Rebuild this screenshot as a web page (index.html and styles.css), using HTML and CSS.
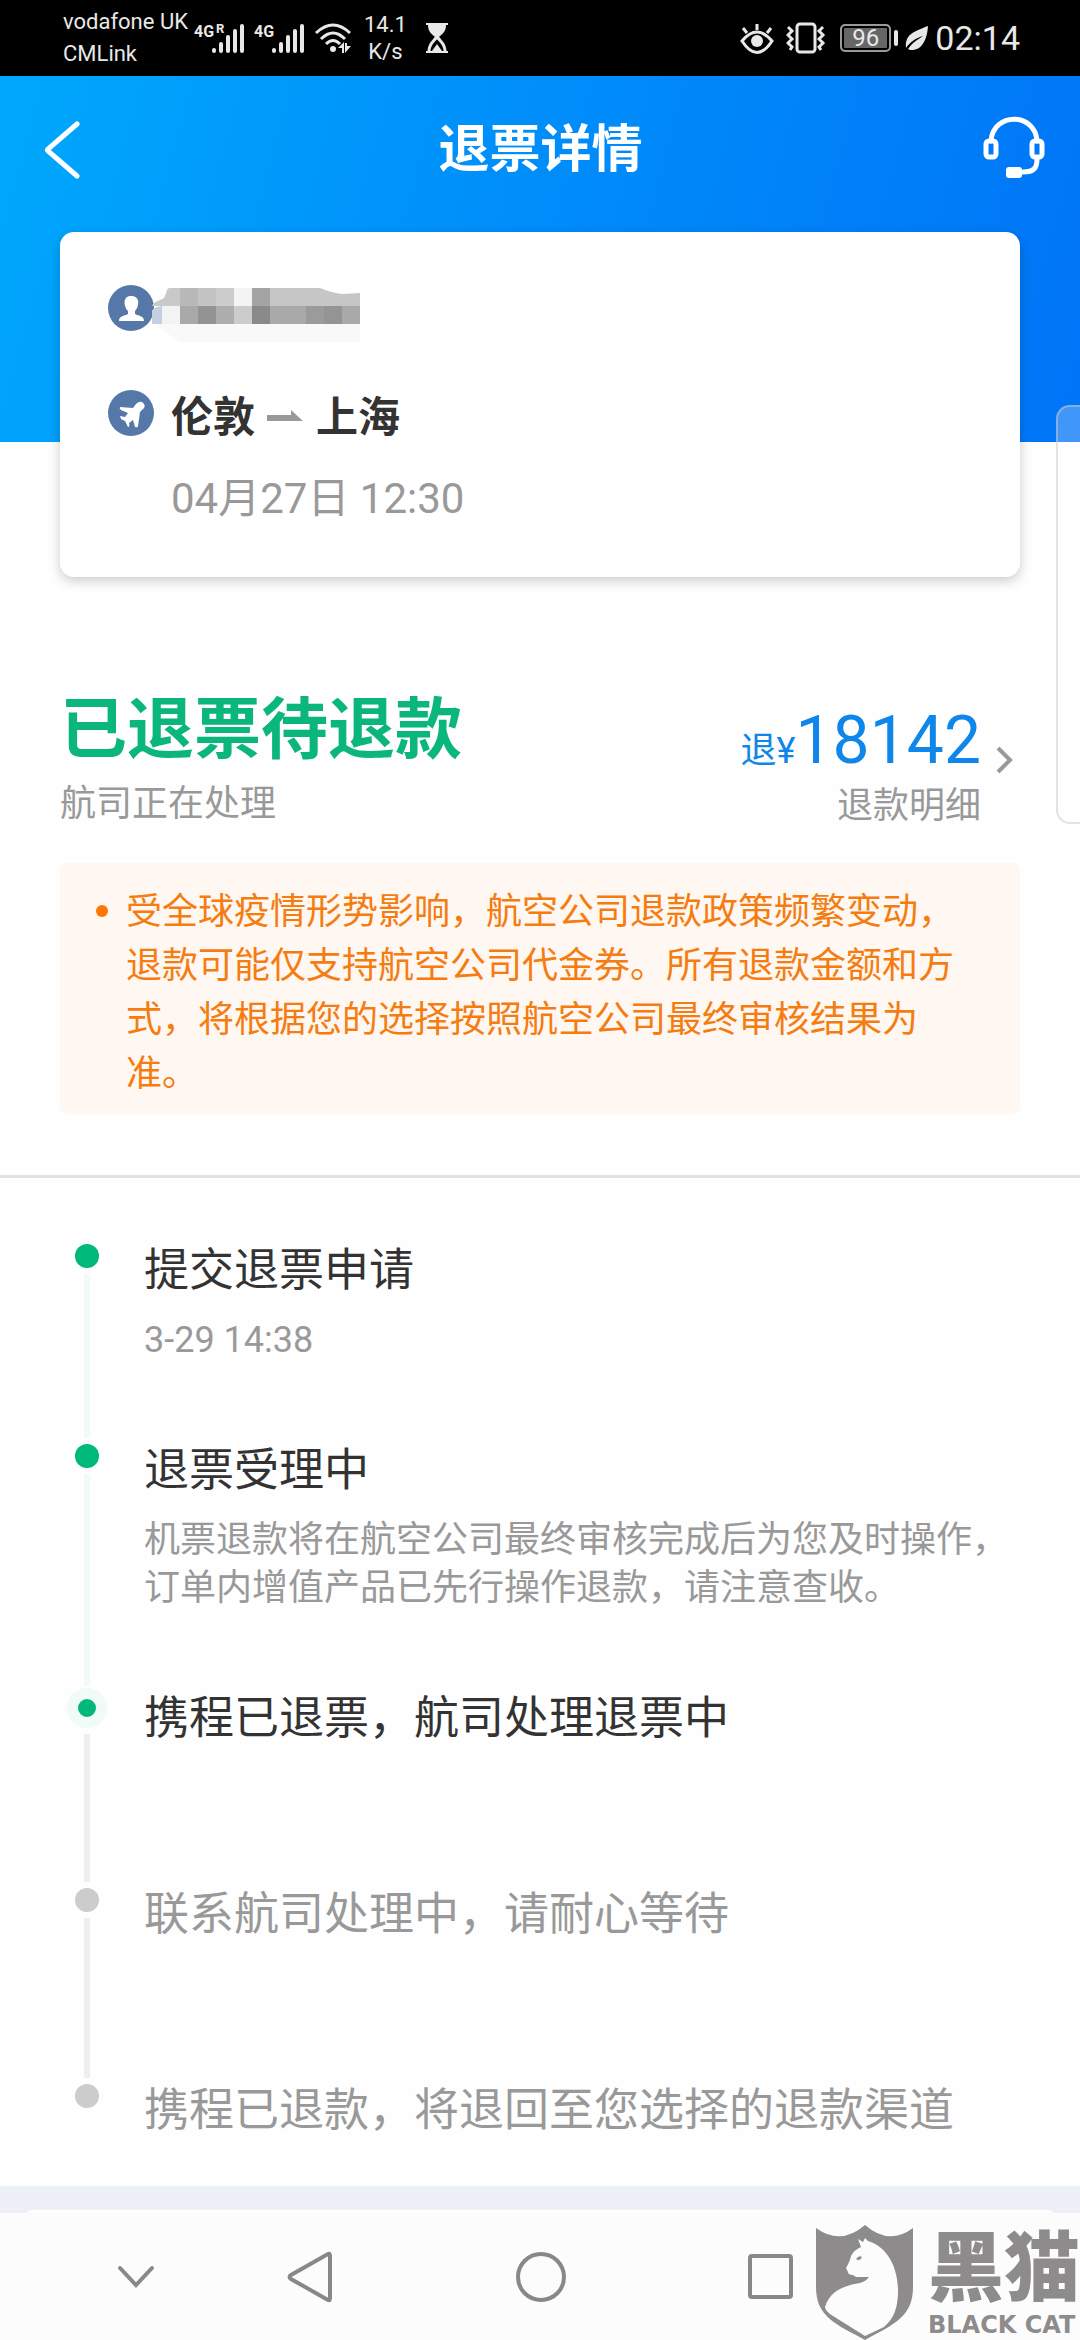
FILE: index.html
```html
<!DOCTYPE html>
<html lang="zh-CN">
<head>
    <meta charset="UTF-8">
    <title>退票详情</title>
    <link rel="stylesheet" href="styles.css">
</head>
<body>

    <div class="status-bar">
        <div class="carrier">vodafone UK<br>CMLink</div>
        <svg class="signal" width="52" height="32" viewBox="0 0 52 32">
            <text x="0" y="15">4G</text>
            <text class="roaming" x="22" y="11">R</text>
            <path d="M20 28v1M27 22v7M34 15v14M41 9v20M48 4v25"/>
        </svg>
        <svg class="signal second" width="52" height="32" viewBox="0 0 52 32">
            <text x="0" y="15">4G</text>
            <path d="M20 28v1M27 22v7M34 15v14M41 9v20M48 4v25"/>
        </svg>
        <svg class="wifi" width="38" height="32" viewBox="0 0 38 32">
            <path class="line" d="M2 11Q19-5 36 11M7 17Q19 5 31 17M12 22Q19 15 26 22"/>
            <circle cx="19" cy="27" r="3"/>
            <path d="M24 26l6-6v11h-2v-5zM31 21h2v3h4l-6 7z"/>
        </svg>
        <div class="speed">14.1<br>K/s</div>
        <svg class="hourglass" width="24" height="32" viewBox="0 0 24 32">
            <path d="M1 1h22v2H1zM1 29h22v2H1zM3 3h18c0 7-4 9-8 13h-2C7 12 3 10 3 3z"/>
            <path class="line" d="M4 29c0-7 4-9 7-13h2c3 4 7 6 7 13"/>
            <path d="M7 29l5-7 5 7z"/>
        </svg>
        <div class="status-right">
            <svg width="34" height="32" viewBox="0 0 34 32">
                <path class="line" d="M2 19Q17 1 32 19Q17 42 2 19zM17 8V2M7 11L3 6M27 11l4-5"/>
                <circle cx="17" cy="19" r="6"/>
            </svg>
            <svg width="40" height="32" viewBox="0 0 40 32">
                <rect class="line" x="11" y="2" width="18" height="28" rx="3"/>
                <path class="line" d="M2 5l4 4-4 4 4 4-4 4 4 4-2 3M37 5l-4 4 4 4-4 4 4 4-4 4 2 3"/>
            </svg>
            <div class="battery">96</div>
            <svg class="leaf" width="24" height="28" viewBox="0 0 24 28">
                <path d="M1 24C0 11 7 8 23 2C22 16 17 27 5 26L3 25C7 19 12 16 18 12C11 14 5 18 1 24z"/>
            </svg>
            <div class="clock">02:14</div>
        </div>
    </div>

    <div class="hero">
        <div class="nav-header">
            <button class="icon-btn back" type="button" aria-label="返回">
                <svg width="36" height="60" viewBox="0 0 36 60">
                    <path d="M33 4L4 29Q3 30 4 31L33 56"/>
                </svg>
            </button>
            <h1>退票详情</h1>
            <button class="icon-btn service" type="button" aria-label="客服">
                <svg width="62" height="62" viewBox="0 0 62 62">
                    <path d="M8 25C10-4 52-4 54 25M54 43c0 9-3 13-14 13"/>
                    <rect x="3" y="25" width="10" height="16" rx="3"/>
                    <rect x="49" y="25" width="10" height="16" rx="3"/>
                    <rect class="mic" x="23" y="51" width="16" height="11" rx="3"/>
                </svg>
            </button>
        </div>

        <div class="card">
            <div class="card-row">
                <svg class="badge" width="46" height="46" viewBox="0 0 46 46">
                    <circle cx="23" cy="23" r="23"/>
                    <path d="M23 11c-9 0-7 11-3 15v3c-4 2-9 2-9 7h25c0-5-5-5-9-7v-3c4-4 6-15-4-15z"/>
                </svg>
                <!-- passenger name is hidden -->
                <svg class="masked" width="214" height="58" viewBox="0 0 214 58">
                    <path fill="#c9c9c9" d="M0 18C2 13 8 13 12 10C15 5 14 0 18 0H30V18z"/>
                    <path fill="#b9b9b9" d="M28 0h18v18H28z"/>
                    <path fill="#c4c4c4" d="M46 0h18v18H46z"/>
                    <path fill="#cccccc" d="M64 0h18v18H64z"/>
                    <path fill="#f4f4f4" d="M82 0h18v18H82z"/>
                    <path fill="#a4a4a4" d="M100 0h18v18h-18z"/>
                    <path fill="#c6c6c6" d="M118 0h50q12 5 22 6l18-1v13h-90z"/>
                    <path fill="#c4d0e2" d="M-4 36v-8q4-9 14-10v18z"/>
                    <path fill="#f3f3f3" d="M10 18h18v18H10z"/>
                    <path fill="#a9a9a9" d="M28 18h18v18H28z"/>
                    <path fill="#939393" d="M46 18h18v18H46z"/>
                    <path fill="#aeaeae" d="M64 18h18v18H64z"/>
                    <path fill="#cccccc" d="M82 18h18v18H82z"/>
                    <path fill="#8a8a8a" d="M100 18h18v18h-18z"/>
                    <path fill="#a9a9a9" d="M118 18h36v18h-36z"/>
                    <path fill="#9b9b9b" d="M154 18h18v18h-18z"/>
                    <path fill="#949494" d="M172 18h18v18h-18z"/>
                    <path fill="#a9a9a9" d="M190 18h18v18h-18z"/>
                    <path fill="#f9f9f9" d="M2 36h206v18H28z"/>
                </svg>
            </div>
            <div class="card-row route">
                <svg class="badge" width="46" height="46" viewBox="0 0 46 46">
                    <circle cx="23" cy="23" r="23"/>
                    <path d="M34 12q-3-1-6 2l-3 4-13-1q-1 2 1 3l7 3-3 4-5-1 1 3 4 2 3 6q2 0 1-4l4-3 2 7q3 1 3-1l2-14 4-4q2-3-2-6z"/>
                </svg>
                <span class="city">伦敦</span>
                <svg class="arrow" width="36" height="12" viewBox="0 0 36 12">
                    <path d="M0 5h24V0l12 11H0z"/>
                </svg>
                <span class="city">上海</span>
            </div>
            <div class="depart">04月27日 12:30</div>
        </div>
    </div>

    <div class="summary">
        <div>
            <h2>已退票待退款</h2>
            <p class="muted">航司正在处理</p>
        </div>
        <a class="refund" href="#">
            <span class="refund-text">
                <span class="amount">退¥<b>18142</b></span>
                <span class="muted">退款明细</span>
            </span>
            <svg width="18" height="30" viewBox="0 0 18 30">
                <path d="M3 3L15 15L3 27"/>
            </svg>
        </a>
    </div>

    <ul class="notice">
        <li>受全球疫情形势影响，航空公司退款政策频繁变动，退款可能仅支持航空公司代金券。所有退款金额和方式，将根据您的选择按照航空公司最终审核结果为准。</li>
    </ul>

    <ol class="timeline">
        <li class="step done">
            <div class="rail"></div>
            <div class="step-body">
                <h3>提交退票申请</h3>
                <p>3-29 14:38</p>
            </div>
        </li>
        <li class="step done">
            <div class="rail"></div>
            <div class="step-body">
                <h3>退票受理中</h3>
                <p>机票退款将在航空公司最终审核完成后为您及时操作，订单内增值产品已先行操作退款，请注意查收。</p>
            </div>
        </li>
        <li class="step current">
            <div class="rail"></div>
            <div class="step-body">
                <h3>携程已退票，航司处理退票中</h3>
            </div>
        </li>
        <li class="step">
            <div class="rail"></div>
            <div class="step-body">
                <h3>联系航司处理中，请耐心等待</h3>
            </div>
        </li>
        <li class="step">
            <div class="rail"></div>
            <div class="step-body">
                <h3>携程已退款，将退回至您选择的退款渠道</h3>
            </div>
        </li>
    </ol>

    <div class="next-section">
        <div class="next-card"></div>
    </div>

    <div class="system-nav">
        <button type="button" aria-label="收起">
            <svg width="54" height="54" viewBox="0 0 54 54"><path d="M11 18l16 17 16-17"/></svg>
        </button>
        <button type="button" aria-label="返回">
            <svg width="54" height="54" viewBox="0 0 54 54"><path d="M44 4L7 25Q4 27 7 29L44 50Q46 51 46 48V6Q46 3 44 4z"/></svg>
        </button>
        <button type="button" aria-label="主页">
            <svg width="54" height="54" viewBox="0 0 54 54"><circle cx="27" cy="27" r="23"/></svg>
        </button>
        <button type="button" aria-label="最近任务">
            <svg width="54" height="54" viewBox="0 0 54 54"><rect x="6" y="6" width="41" height="41" rx="2"/></svg>
        </button>
    </div>

    <div class="side-handle"></div>

    <div class="watermark">
        <svg width="98" height="115" viewBox="0 0 98 115">
            <path class="shield" d="M0 3Q25 21 49 0Q73 21 97 3V62C97 92 78 99 49 115C20 99 0 92 0 62z"/>
            <path class="cat" d="M42 14l5 3 2-4 3 3C72 22 82 43 82 66C82 87 75 96 68 102L49 111L17 91Q9 86 9 82C14 66 27 62 38 59Q49 58 53 52H40L37 50Q32 50 32 47L30 43Q34 36 35 31Q38 25 45 22z"/>
            <path class="shield" d="M40 34q3-4 6-2-2 5-6 2z"/>
        </svg>
        <div class="watermark-text">
            <div class="cn">黑猫</div>
            <div class="en">BLACK CAT</div>
        </div>
    </div>

</body>
</html>
```
FILE: styles.css
```css
*, *::before, *::after {
    box-sizing: border-box;
}

body {
    margin: 0;
    position: relative;
    min-height: 100vh;
    display: flex;
    flex-direction: column;
    overflow-x: hidden;
    font-family: Roboto, "Noto Sans CJK SC", sans-serif;
    font-size: 36px;
    color: #333;
    background: #fefefe;
}

h1, h2, h3, p, ul, ol {
    margin: 0;
    padding: 0;
}

h3, b {
    font-weight: normal;
}

svg {
    display: block;
    flex: none;
}

button {
    padding: 0;
    border: none;
    background: none;
    cursor: pointer;
}

/* status bar */
.status-bar {
    display: flex;
    align-items: center;
    height: 76px;
    padding: 0 60px 0 63px;
    background: #000;
    color: #e8e8e8;
    font-size: 22px;
    line-height: 32px;
    white-space: nowrap;
}

.status-bar svg {
    fill: #e8e8e8;
}

.status-bar .line {
    fill: none;
    stroke: #e8e8e8;
    stroke-width: 3px;
}

.signal {
    margin-left: 6px;
    font-size: 16px;
    font-weight: bold;
}

.signal.second {
    margin-left: 8px;
}

.signal path {
    stroke: #e8e8e8;
    stroke-width: 4px;
    stroke-linecap: round;
}

.signal .roaming {
    font-size: 13px;
}

.wifi {
    margin-left: 8px;
}

.speed {
    margin-left: 12px;
    line-height: 27px;
    text-align: center;
}

.hourglass {
    margin-left: 18px;
}

.status-right {
    display: flex;
    align-items: center;
    margin-left: auto;
}

.status-right svg {
    margin-right: 12px;
}

.battery {
    position: relative;
    width: 51px;
    height: 28px;
    margin: 0 14px 0 2px;
    border: 2px solid #999;
    border-radius: 5px;
    background: #666;
    box-shadow: inset 0 0 0 2px #000;
    font-size: 24px;
    line-height: 25px;
    text-align: center;
}

.battery::after {
    content: "";
    position: absolute;
    right: -9px;
    top: 4px;
    width: 4px;
    height: 16px;
    border-radius: 2px;
    background: #e8e8e8;
}

.status-right .leaf {
    margin-right: 6px;
}

.clock {
    font-size: 34px;
}

/* header and trip card */
.hero {
    padding: 0 60px;
    background: linear-gradient(105deg, #00a8fc, #008cfa 50%, #0074f7) no-repeat;
    background-size: 100% 366px;
}

.nav-header {
    display: flex;
    align-items: center;
    justify-content: space-between;
    height: 148px;
    margin: 0 -25px 8px -16px;
}

.nav-header h1 {
    font-size: 51px;
    line-height: 72px;
    color: #fff;
}

.icon-btn svg {
    fill: none;
    stroke: #fff;
    stroke-width: 5px;
    stroke-linecap: round;
}

.icon-btn.back {
    width: 54px;
}

.icon-btn.service {
    padding-bottom: 6px;
}

.icon-btn .mic {
    fill: #fff;
    stroke: none;
}

.card {
    padding: 53px 48px 50px;
    border-radius: 14px;
    background: #fff;
    box-shadow: 0 4px 12px rgba(0, 0, 0, 0.2);
}

.card-row {
    display: flex;
    align-items: flex-start;
    height: 46px;
}

.badge circle {
    fill: #5578a8;
}

.badge path {
    fill: #fff;
}

.masked {
    margin-top: 3px;
    margin-left: -2px;
}

.route {
    height: 56px;
    margin-top: 59px;
}

.city {
    font-size: 42px;
    line-height: 56px;
    font-weight: bold;
}

.route .city:first-of-type {
    margin-left: 17px;
}

.arrow {
    margin: 20px 13px 0 12px;
    fill: #999;
}

.depart {
    margin-top: 25px;
    margin-left: 63px;
    font-size: 42px;
    line-height: 56px;
    color: #999;
}

/* refund summary */
.summary {
    display: flex;
    align-items: flex-start;
    justify-content: space-between;
    padding: 113px 67px 0 60px;
}

.summary h2 {
    font-size: 67px;
    line-height: 80px;
    color: #0bb67c;
}

.muted {
    font-size: 36px;
    line-height: 48px;
    color: #999;
}

.summary p.muted {
    margin-top: 10px;
}

.refund {
    display: flex;
    align-items: center;
    gap: 14px;
    text-decoration: none;
}

.refund-text {
    display: flex;
    flex-direction: column;
    align-items: flex-end;
    gap: 4px;
    padding-top: 14px;
}

.amount {
    line-height: 48px;
    color: #0f86ea;
}

.amount b {
    font-size: 66px;
    line-height: 74px;
}

.refund svg {
    fill: none;
    stroke: #999;
    stroke-width: 4px;
}

.notice {
    margin: 33px 60px 61px;
    padding: 22px 40px 13px 66px;
    border-radius: 8px;
    background: #fff7f1;
    color: #f57c10;
    line-height: 54px;
    list-style: none;
}

.notice li::before {
    content: "";
    float: left;
    width: 12px;
    height: 12px;
    margin: 20px 0 0 -30px;
    border-radius: 50%;
    background: #ff7700;
}

/* timeline */
.timeline {
    padding: 66px 60px 0;
    border-top: 3px solid #e2e2e2;
    list-style: none;
}

.step {
    display: flex;
    min-height: 196px;
    color: #999;
}

.rail {
    display: flex;
    flex-direction: column;
    align-items: center;
    flex: none;
    width: 54px;
    margin-right: 30px;
}

.rail::before {
    content: "";
    flex: none;
    width: 24px;
    height: 24px;
    border-radius: 50%;
    background: #ccc;
}

.rail::after {
    content: "";
    flex: 1;
    width: 6px;
    margin: 6px 0;
    background: #eee;
}

.step:last-child {
    min-height: 102px;
}

.step:last-child .rail::after {
    display: none;
}

.step h3 {
    font-size: 45px;
    line-height: 54px;
}

.step p {
    margin-top: 18px;
    padding-bottom: 80px;
    line-height: 48px;
    color: #999;
}

.done, .current {
    color: #333;
}

.done .rail::before {
    background: #00b87a;
}

.done .rail::after {
    background: #f0faf7;
}

.current .rail {
    margin-top: -4px;
}

.current .rail::before {
    width: 40px;
    height: 40px;
    border: 11px solid #f0faf7;
    background: #00b87a;
}

/* next section peeks out above the system bar */
.next-section {
    padding: 24px 28px 0;
    background: #edf0f6;
}

.next-card {
    height: 3px;
    border-radius: 3px 3px 0 0;
    background: #fff;
}

.system-nav {
    display: grid;
    grid-template-columns: 12fr 23fr 23fr 23fr;
    flex: 1;
    align-items: center;
    min-height: 126px;
    padding: 0 18% 0 7%;
    background: #fcfcfc;
}

.system-nav svg {
    margin: 0 auto;
    fill: none;
    stroke: #888;
    stroke-width: 4px;
    stroke-linecap: round;
}

.side-handle {
    position: absolute;
    top: 405px;
    right: -3px;
    width: 27px;
    height: 419px;
    border: 2px solid #ddd;
    border-color: rgba(200, 200, 200, 0.5);
    border-radius: 14px 0 0 14px;
    background: rgba(255, 255, 255, 0.25);
}

.watermark {
    position: absolute;
    right: 0;
    bottom: 0;
    display: flex;
    gap: 14px;
    color: #8d8b8b;
}

.shield {
    fill: #8d8b8b;
}

.cat {
    fill: #fcfcfc;
}

.watermark-text .cn {
    margin-top: 3px;
    font-size: 76px;
    line-height: 82px;
    font-weight: 900;
}

.watermark-text .en {
    font-family: "DejaVu Sans", sans-serif;
    font-size: 24px;
    line-height: 30px;
    font-weight: bold;
}
```
